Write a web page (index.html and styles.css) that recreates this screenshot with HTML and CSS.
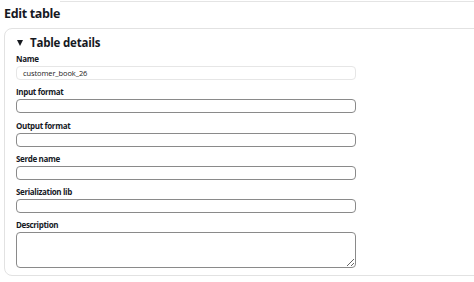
FILE: index.html
```html
<!DOCTYPE html>
<html>
<head>
<meta charset="utf-8">
<link rel="stylesheet" href="styles.css">
</head>
<body>
<div class="topline"></div>
<h1 class="title">Edit table</h1>
<section class="card">
  <div class="card-head">
    <span class="caret"></span>
    <h2 class="card-title">Table details</h2>
  </div>
  <div class="field">
    <label class="label">Name</label>
    <div class="input readonly">customer_book_26</div>
  </div>
  <div class="field">
    <label class="label">Input format</label>
    <div class="input"></div>
  </div>
  <div class="field">
    <label class="label">Output format</label>
    <div class="input"></div>
  </div>
  <div class="field">
    <label class="label">Serde name</label>
    <div class="input"></div>
  </div>
  <div class="field">
    <label class="label">Serialization lib</label>
    <div class="input"></div>
  </div>
  <div class="field">
    <label class="label">Description</label>
    <textarea class="textarea"></textarea>
  </div>
</section>
</body>
</html>
```
FILE: styles.css
```css
html, body {
  margin: 0;
  padding: 0;
  background: #fff;
  overflow: hidden;
}
body {
  width: 474px;
  height: 282px;
  font-family: "Open Sans", "Noto Sans", sans-serif;
  color: #16191f;
}
.topline {
  height: 1px;
  border-bottom: 1px solid #e4e4e4;
  margin-left: 60px;
}
.title {
  margin: 3px 0 0 4px;
  font-size: 12.5px;
  line-height: 17px;
  font-weight: 700;
  letter-spacing: -0.35px;
}
.card {
  margin: 6px 0 0 4px;
  width: 490px;
  height: 248px;
  box-sizing: border-box;
  border: 1px solid #e2e2e2;
  border-radius: 8px;
  padding: 7px 0 0 11px;
}
.card-head {
  display: flex;
  align-items: center;
  gap: 7px;
  margin-bottom: 4px;
}
.caret {
  width: 0;
  height: 0;
  border-left: 3.5px solid transparent;
  border-right: 3.5px solid transparent;
  border-top: 6px solid #16191f;
  margin-left: 1px;
}
.card-title {
  margin: 0;
  font-size: 11.5px;
  line-height: 14px;
  font-weight: 700;
  letter-spacing: -0.2px;
}
.field {
  display: flex;
  flex-direction: column;
  width: 340px;
  margin-bottom: 7.25px;
}
.label {
  font-size: 8px;
  line-height: 10px;
  font-weight: 700;
  letter-spacing: -0.35px;
  margin-bottom: 2px;
}
.input {
  height: 14px;
  box-sizing: border-box;
  border: 1px solid #8a8a8a;
  border-radius: 4px;
  font-size: 7.5px;
  line-height: 12px;
  letter-spacing: -0.1px;
  padding: 0 6px;
}
.input.readonly {
  border-color: #e6e6e6;
  color: #222;
}
.textarea {
  height: 36px;
  box-sizing: border-box;
  border: 1px solid #8a8a8a;
  border-radius: 4px;
  margin: 0;
  font-family: inherit;
}
```
